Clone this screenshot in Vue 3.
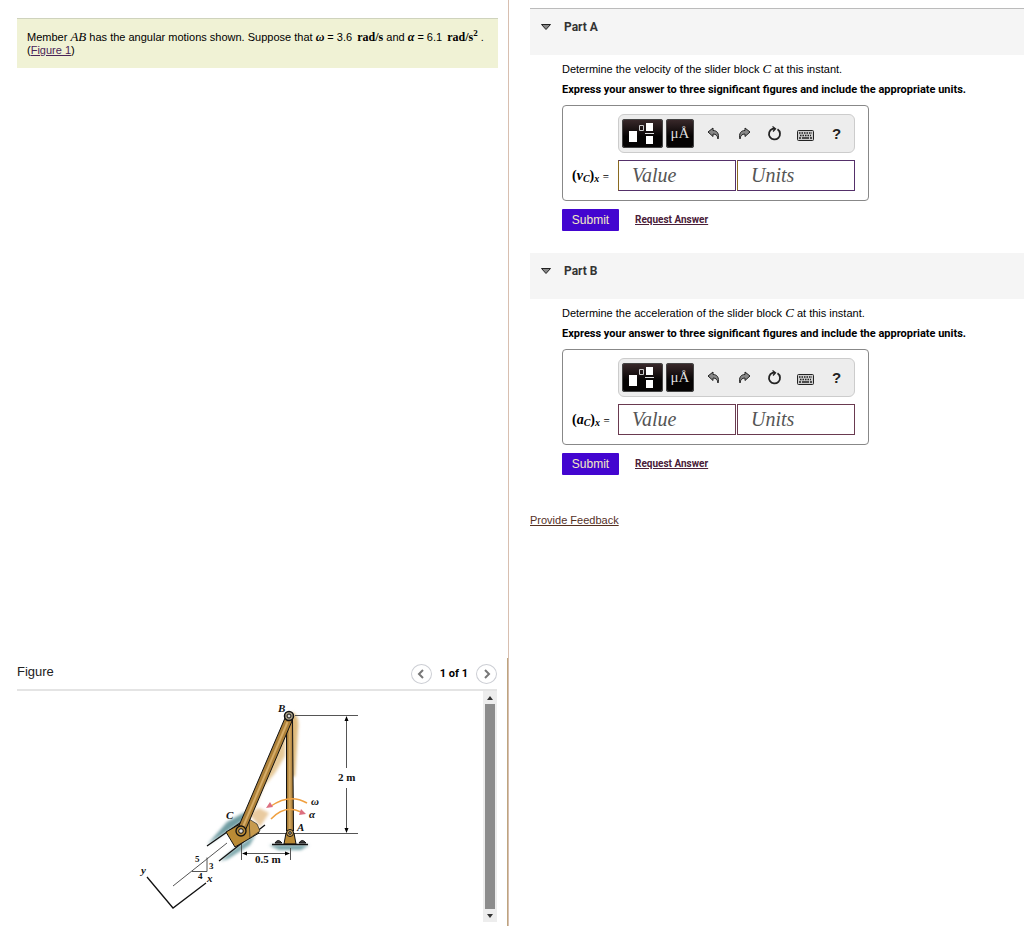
<script setup>
import { ref } from 'vue'

const parts = ref([
  { id: 'a', title: 'Part A', quantity: 'velocity', symbol: 'v', value: '', units: '' },
  { id: 'b', title: 'Part B', quantity: 'acceleration', symbol: 'a', value: '', units: '' },
])
</script>

<template>
  <div class="page">
    <div class="left">
      <section class="intro">
        <p>
          Member <i class="math big">AB</i> has the angular motions shown. Suppose that
          <i class="math greek">ω</i> = 3.6 <span class="math unit">rad/s</span> and
          <i class="math greek">α</i> = 6.1 <span class="math unit">rad/s<sup>2</sup></span> .
        </p>
        <p>(<a href="#figure">Figure 1</a>)</p>
      </section>

      <section id="figure" class="figure">
        <header class="figure-head">
          <h2>Figure</h2>
          <nav class="pager" aria-label="Figures">
            <button type="button" aria-label="Previous figure">
              <svg width="8" height="10" viewBox="0 0 8 10"><path d="M6 1 2 5l4 4" /></svg>
            </button>
            <span>1 of 1</span>
            <button type="button" aria-label="Next figure">
              <svg width="8" height="10" viewBox="0 0 8 10"><path d="m2 1 4 4-4 4" /></svg>
            </button>
          </nav>
        </header>
        <div class="viewer">
          <div class="canvas">
            <svg class="diagram" width="240" height="225" viewBox="130 695 240 225" role="img" aria-label="Linkage with slider block C">
              <defs>
                <filter id="soft" x="-30%" y="-30%" width="160%" height="160%"><feGaussianBlur stdDeviation="1.5" /></filter>
                <linearGradient id="rod" x1="0" x2="1" y1="0" y2="0">
                  <stop offset="0" stop-color="#8e6525" /><stop offset=".45" stop-color="#d8ac62" /><stop offset="1" stop-color="#94692a" />
                </linearGradient>
              </defs>
              <g filter="url(#soft)">
                <path d="M291 712q9 2 7 18l-2 32-1 15-6-2z" fill="#dfbb7c" />
                <path d="m286 728-1 28-10 17-11 13-8 20-7 10z" fill="#e6c998" />
                <path d="m249 814 10-6 10 5-9 14z" fill="#e9cba0" />
                <path d="m207 845 20-23 18-10 4 5z" fill="#6f9ca2" />
                <path d="m220 861 14-12 22-15-6 11-22 14z" fill="#7fa9ad" />
                <path d="M269 845h40l-8 5h-22z" fill="#77a4a9" />
              </g>
              <g class="thin">
                <path d="M295 715.500h63M252 833.500h106M346.500 718v50M346.500 788v44M241.500 838v22M290.500 848v12M243 853.500h46M173 886l54-43M192 871.500h15v-14" />
              </g>
              <path d="m346.500 716-2 5h4zM346.500 833l-2-5h4zM242 853.500l5-2v4zM290 853.500l-5-2v4z" />
              <path class="heavy" d="m207 846 43-30M219 861l46-36M147 877l26 31 33-25" />
              <path d="m226 832 23-13 10 14-24 14z" fill="#b98a35" stroke="#111" />
              <path d="m249 819 8 5 3 7-10 7z" fill="#c79a4d" stroke="#222" stroke-width=".7" />
              <path d="M286.500 719h6l1 112h-7z" fill="url(#rod)" stroke="#111" />
              <path d="m285 718 7 3-47 110-7-3z" fill="#ad8038" stroke="#111" />
              <path d="m287.500 722-45 106" fill="none" stroke="#d6ac68" stroke-width="2" />
              <g stroke="#111">
                <path d="m284 844 2-11q4-6 8 0l2 11z" fill="#b98a35" />
                <path d="M272 844.500h36" stroke-width="1.500" />
                <path d="M275 843q3-5 7 0zM299 843q3-5 7 0z" fill="#444" />
                <circle cx="289" cy="716" r="4.500" fill="#aaa087" stroke-width="1.500" />
                <circle cx="289" cy="716" r="2" fill="#ddd" />
                <circle cx="241" cy="831" r="5" fill="#b98a35" stroke-width="1.300" />
                <circle cx="241" cy="831" r="2.300" fill="#ddd" />
                <circle cx="290" cy="833" r="3.500" fill="#c9a15b" />
                <circle cx="290" cy="833" r="1.300" fill="#ddd" />
              </g>
              <g fill="none" stroke="#f0a040" stroke-width="1.500">
                <path d="M307 803q-17-10-36 3M271 819q14-15 30-7" />
              </g>
              <path d="m266 808 4-6 3 5zM306 814l-7 1 2-6z" fill="#dd6f80" />
              <g class="labels">
                <text x="278" y="712">B</text>
                <text x="226" y="819">C</text>
                <text x="297" y="831">A</text>
                <text x="311" y="805">ω</text>
                <text x="309" y="818">α</text>
                <text x="141" y="874">y</text>
                <text x="207" y="882">x</text>
              </g>
              <g class="dims">
                <text x="338" y="781">2 m</text>
                <text x="255" y="863">0.5 m</text>
                <g class="small">
                  <text x="195" y="862">5</text>
                  <text x="209" y="869">3</text>
                  <text x="198" y="879">4</text>
                </g>
              </g>
            </svg>
          </div>
          <div class="scroll">
            <button type="button" aria-label="Scroll up"><svg width="6" height="4"><path d="M0 4h6L3 0z" /></svg></button>
            <div class="thumb"></div>
            <button type="button" aria-label="Scroll down"><svg width="6" height="4"><path d="M0 0h6L3 4z" /></svg></button>
          </div>
        </div>
      </section>
    </div>

    <main class="right">
      <section v-for="part in parts" :key="part.id" class="part">
        <header class="part-head">
          <button type="button" class="toggle" :aria-label="'Collapse ' + part.title">
            <svg width="10" height="6" viewBox="0 0 10 6"><path d="M.5.5h9l-4.500 5z" fill="#888" stroke="#222" /></svg>
          </button>
          <h2>{{ part.title }}</h2>
        </header>
        <form class="part-body" @submit.prevent>
          <p>Determine the {{ part.quantity }} of the slider block <i class="math big">C</i> at this instant.</p>
          <p class="express">Express your answer to three significant figures and include the appropriate units.</p>
          <div class="answer">
            <div class="toolbar">
              <button type="button" class="dark wide" aria-label="Templates">
                <svg width="41" height="29" viewBox="0 0 41 29">
                  <path d="M7 12h8v11H7zM24 4h7v8h-7zM24 17h7v8h-7z" fill="#fff" />
                  <path d="M23 14.500h9" stroke="#ddd" /><path d="M17.500 6.500h4v5h-4z" fill="none" stroke="#ccc" />
                </svg>
              </button>
              <button type="button" class="dark">μÅ</button>
              <button type="button" class="tool" aria-label="Undo">
                <svg width="13" height="13" viewBox="0 0 13 13"><path d="M1 5 6 1v2.500c4 0 6.500 3 5 8.500C10.500 8.500 9 7 6 7v2.500z" fill="#888" stroke="#222" /></svg>
              </button>
              <button type="button" class="tool" aria-label="Redo">
                <svg width="13" height="13" viewBox="0 0 13 13"><path d="M12 5 7 1v2.500C3 3.500.5 6.500 2 12c.5-3.500 2-5 5-5v2.500z" fill="#888" stroke="#222" /></svg>
              </button>
              <button type="button" class="tool" aria-label="Reset">
                <svg width="15" height="15" viewBox="0 0 15 15"><path d="M10.500 3.300a5.500 5.500 0 1 1-5-.5h2.500" fill="none" stroke="#222" stroke-width="1.800" /><path d="M5.500.5 8.500 2.800 6 5.500" fill="none" stroke="#222" stroke-width="1.300" /></svg>
              </button>
              <button type="button" class="tool" aria-label="Keyboard">
                <svg class="keys" width="17" height="11" viewBox="0 0 17 11"><rect x=".5" y=".5" width="16" height="10" rx="1" fill="#ccc" stroke="#222" /><path d="M2 3h13M3 5.500h11" stroke="#222" stroke-width="1.500" stroke-dasharray="1.500 1" /><path d="M2 8h2m1 0h7m1 0h2" stroke="#222" stroke-width="1.500" /></svg>
              </button>
              <button type="button" class="tool help" aria-label="Help">?</button>
            </div>
            <label class="math name" :for="'value-' + part.id">(<i>{{ part.symbol }}<sub>C</sub></i>)<sub><i>x</i></sub> <span>=</span></label>
            <div class="fields">
              <input :id="'value-' + part.id" v-model="part.value" type="text" placeholder="Value" />
              <input v-model="part.units" type="text" placeholder="Units" aria-label="Units" />
            </div>
          </div>
          <div class="actions">
            <button type="submit" class="submit">Submit</button>
            <a href="#answer">Request Answer</a>
          </div>
        </form>
      </section>
      <a class="feedback" href="#feedback">Provide Feedback</a>
    </main>
  </div>
</template>

<style>
body { margin: 0; background: #fff; }
</style>

<style scoped>
* { box-sizing: border-box; }
.page {
  display: grid;
  grid-template-columns: 509fr 515fr;
  min-height: 100vh;
  font: 11px/16px "Liberation Sans", Arial, sans-serif;
  color: #000;
}
p, h2 { margin: 0; }
button { padding: 0; border: 0; background: none; font: inherit; color: inherit; cursor: pointer; }
a { color: #4a2458; }
.math { font-family: "Liberation Serif", "Times New Roman", serif; }
.big { font-size: 13px; line-height: 1; }
.greek { font-size: 12px; line-height: 1; font-weight: bold; }
.unit { font-size: 12px; line-height: 1; margin-left: 2px; font-weight: bold; }
.unit sup { font-size: 9px; line-height: 1; vertical-align: 5px; }

.left { display: flex; flex-direction: column; justify-content: space-between; min-width: 0; border-right: 1px solid #d8bfb0; }
.intro { margin: 18px 10px 0 17px; padding: 10px 8px 11px 10px; border-top: 1px solid #cfd3bd; background: #f0f2d5; line-height: 14px; }
.intro p { height: 14px; white-space: nowrap; }
.figure { border-right: 1px solid #bda57f; padding: 0 10px 4px 17px; }
.figure-head { display: flex; justify-content: space-between; height: 33px; padding-top: 5px; border-bottom: 2px solid #e4e4e4; }
.figure-head h2 { font-size: 13px; line-height: 18px; font-weight: normal; color: #222; }
.pager { display: flex; align-items: center; gap: 8px; height: 21px; font-family: Roboto, "Liberation Sans", sans-serif; font-weight: bold; }
.pager button { display: grid; place-items: center; width: 21px; height: 20px; border: 1px solid #ccced4; border-radius: 50%; }
.pager path { fill: none; stroke: #777; stroke-width: 2; }
.viewer { display: flex; height: 231px; }
.canvas { flex: 1; display: flex; justify-content: center; align-items: flex-start; padding-top: 4px; overflow: hidden; }
.diagram { flex: none; }
.thin path { fill: none; stroke: #555; stroke-width: 1; }
.heavy { fill: none; stroke: #111; stroke-width: 1.3; }
.labels, .dims { font: italic bold 11px "Liberation Serif", serif; fill: #111; }
.dims { font-style: normal; }
.small { font-size: 9px; }
.scroll { display: flex; flex-direction: column; width: 14px; padding: 0 2px; background: #ededed; }
.scroll button { display: grid; place-items: center; height: 13px; }
.scroll svg { fill: #333; }
.thumb { flex: 1; background: #8c8c8c; }

.right { min-width: 0; padding: 8px 0 20px 21px; }
.part-head { display: flex; align-items: flex-start; height: 46px; padding: 9px 0 0 11px; background: #f5f5f5; }
.part:first-child .part-head { height: 47px; border-top: 1px solid #bbb; }
.part-head h2 { font: bold 12px/18px Roboto, "Liberation Sans", sans-serif; color: #333; }
.toggle { display: grid; place-items: center start; width: 23px; height: 18px; }
.part-body { padding: 6px 16px 22px 32px; }
.part-body p { height: 16px; margin-bottom: 5px; white-space: nowrap; }
.part-body .express { margin-bottom: 7px; font-family: Roboto, "Liberation Sans", sans-serif; font-weight: bold; }
.answer { display: grid; grid-template-columns: 46px minmax(0, 1fr); row-gap: 7px; width: 100%; max-width: 307px; padding: 8px 13px 9px 9px; border: 1px solid #888; border-radius: 4px; }
.toolbar { grid-column: 2; display: flex; align-items: center; height: 39px; padding: 0 2px 0 3px; border: 1px solid #ccc; border-radius: 6px; background: #ededed; }
.dark { flex: none; width: 28px; height: 29px; margin-right: 4px; border-radius: 3px; background: linear-gradient(#3b2a2c, #050303 60%); color: #ddd; font: 15px/29px "Liberation Serif", serif; box-shadow: inset 0 0 0 1px #444; }
.wide { width: 41px; margin-right: 3px; }
.dark svg { display: block; }
.tool { display: grid; place-items: center; flex: 1; height: 29px; }
.help { font: bold 15px "Liberation Sans", Arial, sans-serif; color: #222; }
.keys { margin-top: 3px; }
.name { align-self: center; font-size: 14px; font-weight: bold; line-height: 18px; white-space: nowrap; }
.name sub { font-size: 10px; line-height: 1; vertical-align: -2px; }
.name span { font-size: 11px; }
.fields { display: flex; gap: 1px; }
.fields input { flex: 1; min-width: 0; height: 31px; padding: 0 13px; border: 1px solid #55306a; border-left-color: #8a6a20; border-radius: 0; background: #fff; font: italic 20px "Liberation Serif", serif; color: #222; }
.fields input::placeholder { color: #555; opacity: 1; }
.part:nth-child(2) .fields input { border-color: #6a3a50; }
.actions { display: flex; align-items: center; gap: 16px; margin-top: 8px; }
.submit { width: 57px; height: 22px; border-radius: 1px; background: #4305d0; color: #f3e9c4; font-size: 12px; }
.actions a { font: bold 10px/16px Roboto, "Liberation Sans", sans-serif; color: #4a2038; }
.feedback { display: inline-block; margin-top: 15px; color: #54301f; }
</style>
